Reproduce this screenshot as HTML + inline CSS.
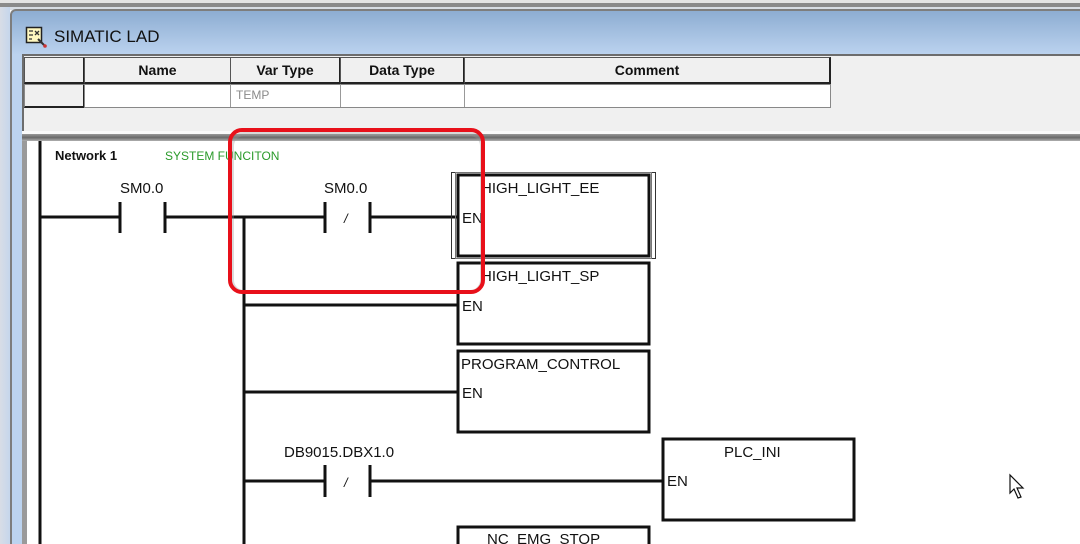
<!DOCTYPE html>
<html><head><meta charset="utf-8"><style>
html,body{margin:0;padding:0;width:1080px;height:544px;overflow:hidden;background:#fff;font-family:"Liberation Sans",Arial,sans-serif;position:relative;}
.a{position:absolute;}
</style></head><body>
<div class="a" style="left:0;top:0;width:1080px;height:3px;background:#e4e4e4"></div>
<div class="a" style="left:0;top:3px;width:1080px;height:4px;background:#8a8a8a"></div>
<div class="a" style="left:0;top:7px;width:1080px;height:3px;background:#d8dde4"></div>
<div class="a" style="left:0;top:7px;width:10px;height:537px;background:linear-gradient(90deg,#d8dde6,#c5d6ec)"></div>
<div class="a" style="left:10px;top:9px;width:1070px;height:535px;border-left:2px solid #7d7d7d;border-top:2px solid #7d7d7d;border-top-left-radius:6px;background:linear-gradient(180deg,#8dadd2 0px,#bcd3ef 44px,#bcd3ef 535px);box-sizing:border-box"></div>
<svg class="a" style="left:25px;top:26px" width="24" height="22" viewBox="0 0 24 22">
<rect x="1.5" y="1.5" width="15" height="15" fill="#fff8c0" stroke="#222" stroke-width="1.5"/>
<path d="M4 5h4M4 9h4M4 13h3M10 5l4 4M14 5l-4 4" stroke="#333" stroke-width="1.3"/>
<path d="M13 13l6 6" stroke="#333" stroke-width="2"/><circle cx="20" cy="20" r="1.8" fill="#c33"/>
</svg>
<div class="a" style="left:54px;top:27px;font-size:17px;color:#111">SIMATIC LAD</div>
<div class="a" style="left:22px;top:54px;width:1058px;height:84px;background:#f0f0f0;border-top:2px solid #6d6d6d;box-sizing:border-box"></div>
<div class="a" style="left:22px;top:54px;width:2px;height:84px;background:#6d6d6d"></div>
<div class="a" style="left:22px;top:131px;width:1058px;height:3px;background:#fafafa"></div>
<div class="a" style="left:22px;top:134px;width:1058px;height:7px;background:linear-gradient(180deg,#9a9a9a,#6a6a6a,#b0b0b0)"></div>
<div class="a" style="left:24px;top:57px;width:806px;height:50px;">
 <div class="a" style="left:0;top:0;width:58px;height:24px;background:#f0f0f0;border:1px solid #555;border-right:2px solid #222;border-bottom:2px solid #222"></div>
 <div class="a" style="left:60px;top:0;width:145px;height:24px;background:#f0f0f0;border:1px solid #555;border-right:2px solid #222;border-bottom:2px solid #222;font-weight:bold;font-size:14px;text-align:center;line-height:24px;color:#111">Name</div>
 <div class="a" style="left:206px;top:0;width:108px;height:24px;background:#f0f0f0;border:1px solid #555;border-right:2px solid #222;border-bottom:2px solid #222;font-weight:bold;font-size:14px;text-align:center;line-height:24px;color:#111">Var Type</div>
 <div class="a" style="left:316px;top:0;width:122px;height:24px;background:#f0f0f0;border:1px solid #555;border-right:2px solid #222;border-bottom:2px solid #222;font-weight:bold;font-size:14px;text-align:center;line-height:24px;color:#111">Data Type</div>
 <div class="a" style="left:440px;top:0;width:364px;height:24px;background:#f0f0f0;border:1px solid #555;border-right:2px solid #222;border-bottom:2px solid #222;font-weight:bold;font-size:14px;text-align:center;line-height:24px;color:#111">Comment</div>
 <div class="a" style="left:0;top:27px;width:58px;height:21px;background:#f0f0f0;border:1px solid #888;border-right:2px solid #222;border-bottom:2px solid #222"></div>
 <div class="a" style="left:60px;top:27px;width:745px;height:22px;background:#fff;border:1px solid #888;"></div>
 <div class="a" style="left:206px;top:27px;width:1px;height:23px;background:#999"></div>
 <div class="a" style="left:316px;top:27px;width:1px;height:23px;background:#999"></div>
 <div class="a" style="left:440px;top:27px;width:1px;height:23px;background:#999"></div>
 <div class="a" style="left:212px;top:31px;font-size:12px;color:#8a8a8a">TEMP</div>
</div>
<div class="a" style="left:22px;top:141px;width:1058px;height:403px;background:#fff"></div>
<div class="a" style="left:22px;top:141px;width:5px;height:403px;background:#9a9a9a"></div>
<div class="a" style="left:55px;top:148px;font-size:13px;font-weight:bold;color:#111">Network 1</div>
<div class="a" style="left:165px;top:149px;font-size:12px;color:#2a9a2a">SYSTEM FUNCITON</div>
<svg class="a" style="left:0;top:0" width="1080" height="544">
<g stroke="#111" stroke-width="3" fill="none">
<line x1="40" y1="141" x2="40" y2="544"/>
<line x1="40" y1="217" x2="120" y2="217"/>
<line x1="120" y1="202" x2="120" y2="233"/><line x1="165" y1="202" x2="165" y2="233"/>
<line x1="165" y1="217" x2="244" y2="217"/>
<line x1="244" y1="217" x2="244" y2="544"/>
<line x1="244" y1="217" x2="325" y2="217"/>
<line x1="325" y1="202" x2="325" y2="233"/><line x1="370" y1="202" x2="370" y2="233"/>
<line x1="370" y1="217" x2="458" y2="217"/>
<line x1="244" y1="305" x2="458" y2="305"/>
<line x1="244" y1="392" x2="458" y2="392"/>
<line x1="244" y1="481" x2="325" y2="481"/>
<line x1="325" y1="465" x2="325" y2="497"/><line x1="370" y1="465" x2="370" y2="497"/>
<line x1="370" y1="481" x2="663" y2="481"/>
<rect x="458" y="175" width="191" height="81"/>
<rect x="458" y="263" width="191" height="81"/>
<rect x="458" y="351" width="191" height="81"/>
<rect x="663" y="439" width="191" height="81"/>
<path d="M458 560 V527 H649 V560"/>
</g>
<rect x="451.5" y="172.5" width="204" height="86" fill="none" stroke="#333" stroke-width="1"/>
<rect x="455.5" y="172.5" width="196" height="86" fill="none" stroke="#777" stroke-width="1"/>
<g font-family="Liberation Sans, Arial, sans-serif" font-size="15" fill="#111">
<text x="120" y="193">SM0.0</text>
<text x="324" y="193">SM0.0</text>
<text x="344" y="223" font-size="13" font-style="italic">/</text>
<text x="344" y="487" font-size="13" font-style="italic">/</text>
<text x="284" y="457">DB9015.DBX1.0</text>
<text x="481" y="193">HIGH_LIGHT_EE</text>
<text x="462" y="223">EN</text>
<text x="481" y="281">HIGH_LIGHT_SP</text>
<text x="462" y="311">EN</text>
<text x="461" y="369">PROGRAM_CONTROL</text>
<text x="462" y="398">EN</text>
<text x="724" y="457">PLC_INI</text>
<text x="667" y="486">EN</text>
<text x="487" y="544">NC_EMG_STOP</text>
</g>
<rect x="232" y="134" width="250" height="158" rx="12" fill="none" stroke="#999" stroke-opacity="0.35" stroke-width="4"/>
<rect x="230" y="130" width="253" height="162" rx="12" fill="none" stroke="#e8101a" stroke-width="4"/>
<path d="M1010 475 L1010 493 L1014 489 L1018 498 L1021 497 L1017 488 L1023 488 Z" fill="#fff" stroke="#111" stroke-width="1.2"/>
</svg>
</body></html>
